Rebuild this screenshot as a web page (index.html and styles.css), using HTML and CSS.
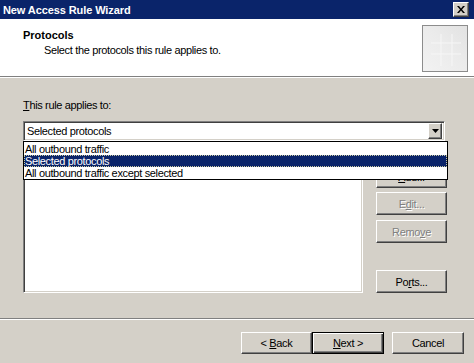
FILE: index.html
```html
<!DOCTYPE html>
<html>
<head>
  <title>New Access Rule Wizard</title>
  <link rel="stylesheet" href="styles.css">
</head>
<body>
  <div class="window">
    <div class="titlebar">
      <span class="title">New Access Rule Wizard</span>
      <span class="close">
        <svg width="8" height="7" viewBox="0 0 8 7"><path d="M0 0h2l2 2.5L6 0h2L5 3.5 8 7H6L4 4.5 2 7H0l3-3.5z" fill="#000"/></svg>
      </span>
    </div>

    <div class="header">
      <div class="header-text">
        <div class="page-title">Protocols</div>
        <div class="page-desc">Select the protocols this rule applies to.</div>
      </div>
      <div class="wizard-icon">
        <svg width="44" height="45" viewBox="0 0 44 45">
          <path d="M8 17h30M8 28h30M18 8v32M29 8v32" stroke="#f6f6f6" stroke-width="1"/>
        </svg>
      </div>
    </div>

    <div class="content">
      <div class="field-label"><u>T</u>his rule applies to:</div>
      <div class="combo">
        <span class="combo-value">Selected protocols</span>
        <span class="combo-arrow">
          <svg width="7" height="4" viewBox="0 0 7 4"><path d="M0 0h7L3.5 4z" fill="#000"/></svg>
        </span>
        <div class="combo-list">
          <div class="combo-item">All outbound traffic</div>
          <div class="combo-item selected">Selected protocols</div>
          <div class="combo-item">All outbound traffic except selected</div>
        </div>
      </div>

      <div class="protocol-row">
        <div class="listbox"></div>
        <div class="side-buttons">
          <button class="btn"><u>A</u>dd...</button>
          <button class="btn" disabled>E<u>d</u>it...</button>
          <button class="btn" disabled>Remo<u>v</u>e</button>
          <button class="btn ports">Po<u>r</u>ts...</button>
        </div>
      </div>
    </div>

    <div class="divider"></div>

    <div class="footer">
      <button class="btn back">&lt; <u>B</u>ack</button>
      <button class="btn next"><u>N</u>ext &gt;</button>
      <button class="btn cancel">Cancel</button>
    </div>
  </div>
</body>
</html>
```

FILE: styles.css
```css
body {
  margin: 0;
  padding: 0;
  background-color: #d4d0c8;
  font-family: "Liberation Sans", Arial, sans-serif;
  font-size: 11px;
  letter-spacing: -0.35px;
  color: #000;
}
u {
  text-decoration: underline;
  text-underline-offset: 1px;
}
.window {
  width: 474px;
  height: 363px;
  overflow: hidden;
}
.titlebar {
  height: 19px;
  background-color: #0a246a;
  display: flex;
  justify-content: space-between;
  align-items: center;
  padding: 0 5px 0 3px;
}
.title {
  color: #fff;
  font-weight: bold;
  letter-spacing: -0.1px;
}
.close {
  width: 14px;
  height: 13px;
  background-color: #d4d0c8;
  border: 1px solid;
  border-color: #fff #404040 #404040 #fff;
  box-shadow: inset -1px -1px 0 #808080;
  display: flex;
  align-items: center;
  justify-content: center;
}
.header {
  height: 57px;
  background-color: #fff;
  border-bottom: 1px solid #808080;
  display: flex;
  justify-content: space-between;
  align-items: flex-start;
}
.header-text {
  padding: 10px 0 0 23px;
}
.page-title {
  font-weight: bold;
  letter-spacing: 0;
  line-height: 13px;
}
.page-desc {
  margin: 2px 0 0 21px;
  line-height: 13px;
}
.wizard-icon {
  width: 44px;
  height: 45px;
  margin: 6px 6px 0 0;
  border: 1px solid #8c8c8c;
  background: linear-gradient(45deg, #f2f2f2, #ebebeb 55%, #e2e2e2);
}
.wizard-icon svg {
  display: block;
}
.content {
  border-top: 1px solid #fff;
  padding: 21px 27px 0 23px;
}
.field-label {
  line-height: 13px;
}
.combo {
  position: relative;
  height: 20px;
  margin: 9px 2px 0 0;
  background-color: #fff;
  border: 1px solid;
  border-color: #808080 #fff #fff #808080;
  box-shadow: inset 1px 1px 0 #404040, inset -1px -1px 0 #d4d0c8;
  box-sizing: border-box;
  display: flex;
  align-items: center;
  justify-content: space-between;
  padding: 0 2px 0 3px;
}
.combo-value {
  line-height: 13px;
}
.combo-arrow {
  width: 12px;
  height: 14px;
  background-color: #d4d0c8;
  border: 1px solid;
  border-color: #fff #404040 #404040 #fff;
  box-shadow: inset -1px -1px 0 #808080;
  display: flex;
  align-items: center;
  justify-content: center;
}
.combo-list {
  position: absolute;
  top: 19px;
  left: -1px;
  width: 425px;
  height: 39px;
  box-sizing: border-box;
  background-color: #fff;
  border: 1px solid #000;
  padding-top: 1px;
  z-index: 2;
}
.combo-item {
  height: 12px;
  line-height: 12px;
  padding-left: 1px;
}
.combo-item.selected {
  background-color: #0a246a;
  color: #fff;
  outline: 1px dotted #c8c8a0;
  outline-offset: -1px;
}
.protocol-row {
  display: flex;
  gap: 13px;
  margin-top: 24px;
  height: 128px;
}
.listbox {
  flex: 1;
  background-color: #fff;
  border: 1px solid;
  border-color: #808080 #fff #fff #808080;
  box-shadow: inset 1px 1px 0 #404040, inset -1px -1px 0 #d4d0c8;
}
.side-buttons {
  width: 71px;
  display: flex;
  flex-direction: column;
  gap: 4px;
}
.btn {
  font-family: inherit;
  font-size: 11px;
  letter-spacing: -0.35px;
  color: #000;
  background-color: #d4d0c8;
  border: 1px solid;
  border-color: #fff #404040 #404040 #fff;
  box-shadow: inset -1px -1px 0 #808080;
  height: 23px;
  padding: 0;
  margin: 0;
}
.btn:disabled {
  color: #808080;
  text-shadow: 1px 1px 0 #fff;
}
.side-buttons .btn:nth-child(3) {
  margin-top: 1px;
}
.ports {
  margin-top: auto;
}
.divider {
  margin-top: 25px;
  border-top: 1px solid #808080;
  border-bottom: 1px solid #fff;
}
.footer {
  display: flex;
  justify-content: flex-end;
  padding: 12px 10px 0 0;
}
.footer .btn {
  height: 22px;
}
.back {
  width: 71px;
}
.next {
  width: 72px;
  border-color: #000;
  box-shadow: inset 1px 1px 0 #fff, inset -1px -1px 0 #404040, inset -2px -2px 0 #808080;
}
.cancel {
  width: 72px;
  margin-left: 8px;
}
```
